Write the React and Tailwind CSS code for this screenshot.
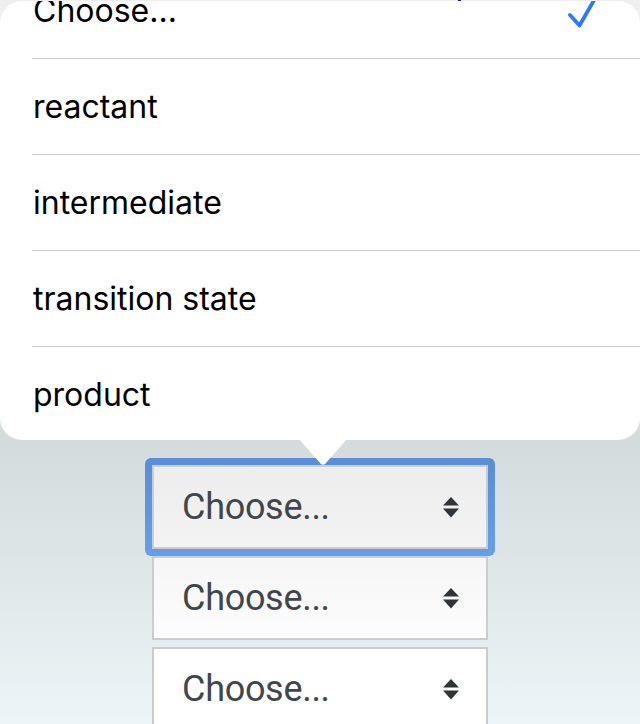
import React from "react";

const options = ["Choose...", "reactant", "intermediate", "transition state", "product"];

function UpDown() {
  return (
    <svg width="16" height="21" viewBox="0 0 16 21" className="shrink-0">
      <path d="M0 8.5 L16 8.5 L8 0 Z" fill="#2e3439" />
      <path d="M0 11.5 L16 11.5 L8 20.5 Z" fill="#2e3439" />
    </svg>
  );
}

function SelectBox({ focused, bg }) {
  const box = (
    <div
      className={`w-[336px] h-[84px] border-2 border-[#c9cdd1] flex items-center justify-between pl-[28px] pr-[27px] ${bg}`}
    >
      <span className="text-[36px] text-[#40464c] font-['Roboto',sans-serif] leading-none tracking-[-0.3px]">
        Choose...
      </span>
      <UpDown />
    </div>
  );
  if (focused) {
    return (
      <div className="p-[7px] -m-[7px] rounded-[6px] bg-[linear-gradient(to_bottom,#5a8dd6,#659fe8)]">
        {box}
      </div>
    );
  }
  return box;
}

export default function App() {
  return (
    <div className="relative w-full h-[724px] overflow-hidden bg-[linear-gradient(to_bottom,#efefef_0px,#e8eaea_300px,#d3dbdc_440px,#ecf5f7_724px)] font-['Inter',sans-serif]">
      <div className="flex flex-col items-center pt-[465px] gap-[7px]">
        <SelectBox focused bg="bg-[linear-gradient(to_bottom,#ededed,#f3f3f3)]" />
        <SelectBox bg="bg-[linear-gradient(to_bottom,#f5f5f5,#fdfdfd)]" />
        <SelectBox bg="bg-white" />
      </div>

      <div className="absolute left-[458px] top-0 w-[3px] h-[2px] bg-[#1c1c7a]" />

      <div className="absolute left-0 right-0 top-[1px] h-[439px] rounded-[22px] bg-white overflow-hidden">
        <div className="-mt-[38px] flex flex-col">
          {options.map((o, i) => (
            <div key={o} className="flex flex-col">
              {i > 0 && <div className="ml-[32px] h-px bg-[#cbcbcb]" />}
              <div className="h-[95px] flex items-center justify-between pl-[33px] pr-[40px]">
                <span className="text-[32px] text-black leading-none">{o}</span>
                {i === 0 && (
                  <svg width="32" height="36" viewBox="0 0 32 36">
                    <path
                      d="M2 22 L11.5 32.5 L29 2"
                      fill="none"
                      stroke="#2b7cf2"
                      strokeWidth="3.8"
                      strokeLinecap="round"
                      strokeLinejoin="round"
                    />
                  </svg>
                )}
              </div>
            </div>
          ))}
        </div>
      </div>

      <svg
        className="absolute left-[299px] top-[439px]"
        width="48"
        height="27"
        viewBox="0 0 48 27"
      >
        <path d="M0 0 L48 0 L26.5 24.5 Q24 27 21.5 24.5 Z" fill="white" />
      </svg>
    </div>
  );
}
